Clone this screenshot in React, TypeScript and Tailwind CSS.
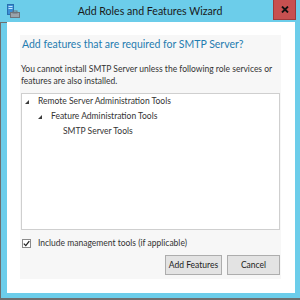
import React from "react";

const F = { fontFamily: 'Lato, "Open Sans", sans-serif' };

function AppIcon() {
  return (
    <svg width="13" height="14" viewBox="0 0 13 14">
      <rect x="0.5" y="0.5" width="6" height="10" fill="#3a8fd6" stroke="#2a6fb0" />
      <rect x="1.5" y="2" width="4" height="1" fill="#bfe3ff" />
      <rect x="1.5" y="4" width="4" height="1" fill="#bfe3ff" />
      <rect x="3.5" y="8.5" width="9" height="5" fill="#9aa3ab" stroke="#6d757c" />
      <rect x="6" y="7" width="4" height="2" fill="none" stroke="#6d757c" />
    </svg>
  );
}

function Tri() {
  return (
    <svg width="4" height="4" viewBox="0 0 4 4" className="shrink-0">
      <polygon points="4,0 4,4 0,4" fill="#3c3c3c" />
    </svg>
  );
}

export default function App() {
  return (
    <div className="w-[300px] h-[300px] bg-[#6ccdea] flex flex-col overflow-hidden" style={F}>
      <div className="h-[22px] grid grid-cols-[1fr_auto_1fr] items-start shrink-0">
        <div className="pl-[7px] pt-[4px]">
          <AppIcon />
        </div>
        <div className="h-[22px] flex items-center text-[10.6px] leading-none text-[#1a1a1a] whitespace-nowrap">
          Add Roles and Features Wizard
        </div>
        <div className="flex justify-end pr-[4px]">
          <div className="w-[23px] h-[20px] bg-[#c75050] border border-[#9e3a3a] border-t-0 flex items-center justify-center">
            <svg width="8" height="7" viewBox="0 0 8 7">
              <path d="M1 0.5 L7 6.5 M7 0.5 L1 6.5" stroke="#111" strokeWidth="1.8" />
            </svg>
          </div>
        </div>
      </div>
      <div className="flex-1 flex flex-col border-l border-b-2 border-[#6e6e6e]">
        <div className="flex-1 flex">
          <div className="w-[6px] border-t border-[#6e6e6e]" />
          <div className="flex-1 bg-white pt-[13px] pl-[13px] pr-[14px] pb-[14px] flex">
            <div className="flex-1 bg-[#f7f7f7] flex flex-col px-[1px]">
              <div className="mt-[3px] pl-[1px] text-[10.5px] leading-[12px] text-[#1f7cb0] whitespace-nowrap">
                Add features that are required for SMTP Server?
              </div>
              <div className="mt-[13px] text-[8.5px] leading-[12px] text-[#333]">
                <div className="whitespace-nowrap">You cannot install SMTP Server unless the following role services or</div>
                <div className="whitespace-nowrap">features are also installed.</div>
              </div>
              <div className="mt-[6px] h-[137px] bg-white border border-[#cfcfcf] text-[8.5px] leading-[15px] text-[#333]">
                <div className="flex items-center gap-[9px] pl-[3px]">
                  <Tri />
                  <span className="whitespace-nowrap">Remote Server Administration Tools</span>
                </div>
                <div className="flex items-center gap-[9px] pl-[16px]">
                  <Tri />
                  <span className="whitespace-nowrap">Feature Administration Tools</span>
                </div>
                <div className="flex items-center pl-[41px]">
                  <span className="whitespace-nowrap">SMTP Server Tools</span>
                </div>
              </div>
              <div className="mt-[7px] flex items-center gap-[7px] pl-[1px]">
                <div className="w-[9px] h-[9px] bg-white border border-[#8a8a8a] flex items-center justify-center">
                  <svg width="7" height="7" viewBox="0 0 7 7">
                    <path d="M0.8 3.6 L2.8 5.6 L6.3 1.2" stroke="#222" strokeWidth="1.3" fill="none" />
                  </svg>
                </div>
                <span className="text-[8.5px] leading-[12px] text-[#333] whitespace-nowrap">Include management tools (if applicable)</span>
              </div>
              <div className="mt-[6px] flex justify-end gap-[5px]">
                <div className="w-[57px] h-[20px] bg-[#e3e3e3] border border-[#adadad] flex items-center justify-center text-[8.5px] text-[#222] whitespace-nowrap">
                  Add Features
                </div>
                <div className="w-[53px] h-[20px] bg-[#e3e3e3] border border-[#adadad] flex items-center justify-center text-[8.5px] text-[#222] whitespace-nowrap">
                  Cancel
                </div>
              </div>
            </div>
          </div>
          <div className="w-[5px]" />
        </div>
        <div className="h-[5px]" />
      </div>
    </div>
  );
}
